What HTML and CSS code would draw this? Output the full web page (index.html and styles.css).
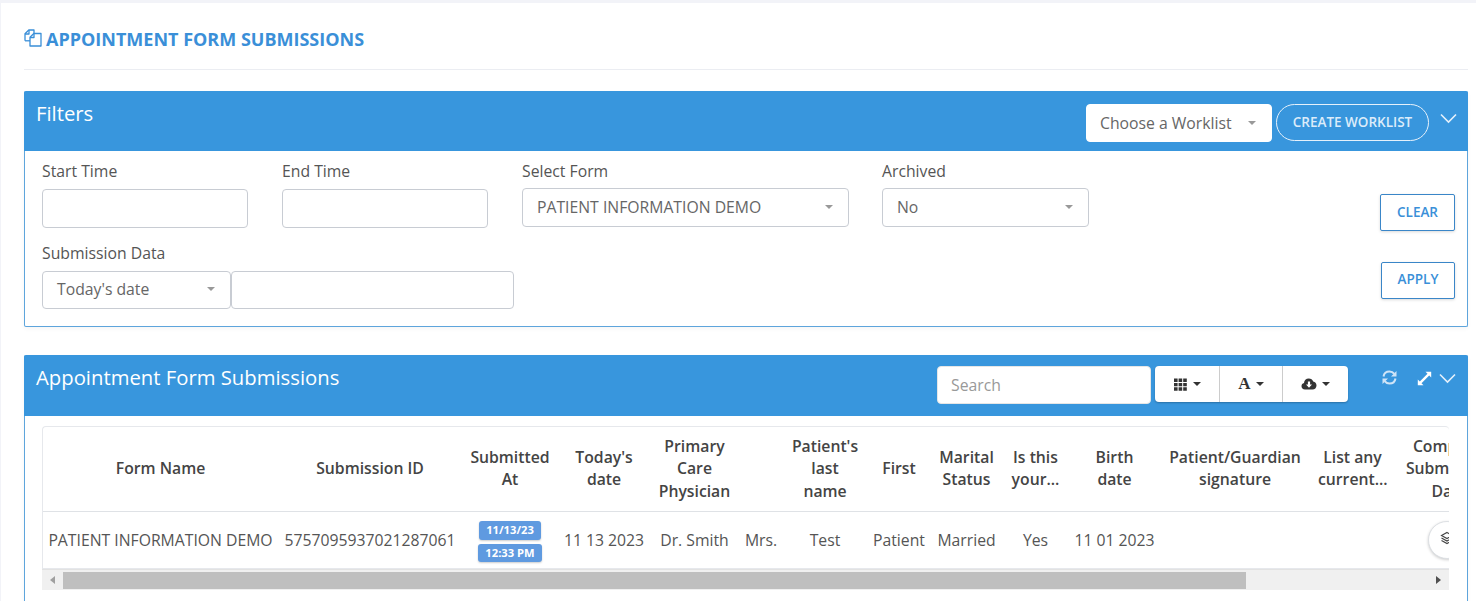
FILE: index.html
```html
<!DOCTYPE html>
<html lang="en">
<head>
<meta charset="utf-8">
<title>Appointment Form Submissions</title>
<link rel="stylesheet" href="styles.css">
</head>
<body>
<main class="page">
  <h1 class="page-title">
    <svg class="title-icon" width="18" height="18" viewBox="0 0 18 18" fill="none" stroke="#3a8fd8" stroke-width="1.3" stroke-linejoin="round"><path d="M1 11.800V4.800L4.800 1H10V4.500"/><path d="M1 5H5V1"/><path d="M1 11.800H6"/><path d="M6 17V8.300L9.800 4.500H17V17Z"/><path d="M6 8.500H10V4.500"/></svg>
    APPOINTMENT FORM SUBMISSIONS
  </h1>
  <section class="panel filters">
    <header class="panel-head filters-head">
      <h2 class="panel-title">Filters</h2>
      <div class="head-tools">
        <div class="select worklist"><span>Choose a Worklist</span><i class="caret"></i></div>
        <button class="pill">CREATE WORKLIST</button>
        <svg class="chev" width="18" height="12" viewBox="0 0 18 12" fill="none" stroke="#e4f0fb" stroke-width="1.6"><path d="M1 1.500L8.500 9L16 1.500"/></svg>
      </div>
    </header>
    <div class="filters-body">
      <div class="filter-fields">
        <div class="row">
          <label class="field f-start">Start Time<span class="input"></span></label>
          <label class="field f-end">End Time<span class="input"></span></label>
          <label class="field f-form">Select Form<span class="select up"><span>PATIENT INFORMATION DEMO</span><i class="caret"></i></span></label>
          <label class="field f-arch">Archived<span class="select up"><span>No</span><i class="caret"></i></span></label>
        </div>
        <div class="field-group">
          <span class="group-label">Submission Data</span>
          <div class="group-controls">
            <div class="select today"><span>Today's date</span><i class="caret"></i></div>
            <div class="input wide"></div>
          </div>
        </div>
      </div>
      <div class="filter-actions">
        <button class="outline clear">CLEAR</button>
        <button class="outline apply">APPLY</button>
      </div>
    </div>
  </section>
  <section class="panel results">
    <header class="panel-head results-head">
      <h2 class="panel-title">Appointment Form Submissions</h2>
      <div class="head-tools tools-results">
        <div class="search">Search</div>
        <div class="btn-group">
          <div class="tool t-grid">
            <svg width="15" height="13" viewBox="0 0 15 13" fill="#333"><path d="M1 0.500h3.600v3.400H1zM5.600 0.500h3.600v3.400H5.600zM10.200 0.500h3.600v3.400h-3.600zM1 4.900h3.600v3.400H1zM5.600 4.900h3.600v3.400H5.600zM10.200 4.900h3.600v3.400h-3.600zM1 9.300h3.600v3.400H1zM5.600 9.300h3.600v3.400H5.600zM10.200 9.300h3.600v3.400h-3.600z"/></svg><i class="caret dark"></i>
          </div>
          <div class="tool t-font"><span class="serif-a">A</span><i class="caret dark"></i></div>
          <div class="tool t-cloud">
            <svg width="16" height="12" viewBox="0 0 16 12"><path fill="#333" d="M4 11.500C1.800 11.500 .5 10 .5 8.200 .5 6.600 1.500 5.400 3 5.100 3.100 2.600 5 .5 7.800 .5 9.900 .5 11.500 1.700 12.200 3.500 14.100 3.700 15.500 5.300 15.500 7.400 15.500 9.700 13.800 11.500 11.500 11.500Z"/><path fill="#fff" d="M6.900 3.500H9.100V6.500H11L8 9.800 5 6.500H6.900Z"/></svg><i class="caret dark"></i>
          </div>
        </div>
        <svg class="refresh" width="15" height="15" viewBox="0 0 15 15" fill="none" stroke="#cfe4f7" stroke-width="2"><path d="M1.500 6.500C2 3.500 4.500 1.500 7.500 1.500 9.500 1.500 11.200 2.400 12.300 3.900"/><path d="M13.500 8.500C13 11.500 10.500 13.500 7.500 13.500 5.500 13.500 3.800 12.600 2.700 11.100"/><path fill="#cfe4f7" stroke="none" d="M14.500 1V6.500H9ZM.5 14V8.500H6Z"/></svg>
        <svg class="expand" width="15" height="15" viewBox="0 0 15 15" fill="#fff"><path d="M8.500 .8H14.200V6.500L12.200 4.500 4.500 12.200 6.500 14.200H.8V8.500L2.800 10.500 10.500 2.800Z"/></svg>
        <svg class="chev" width="18" height="12" viewBox="0 0 18 12" fill="none" stroke="#e4f0fb" stroke-width="1.600"><path d="M1 1.500L8.500 9L16 1.500"/></svg>
      </div>
    </header>
    <div class="results-body">
      <div class="table-wrap">
        <table class="grid">
          <colgroup>
            <col class="c-name"><col class="c-id"><col class="c-at"><col class="c-today"><col class="c-phys"><col class="c-title"><col class="c-last"><col class="c-first"><col class="c-marital"><col class="c-is"><col class="c-birth"><col class="c-sig"><col class="c-list"><col class="c-comp">
          </colgroup>
          <thead>
            <tr>
              <th>Form Name</th><th>Submission ID</th><th>Submitted At</th><th>Today's date</th><th>Primary Care Physician</th><th></th><th>Patient's last name</th><th>First</th><th>Marital Status</th><th>Is this your...</th><th>Birth date</th><th>Patient/Guardian signature</th><th>List any current...</th><th>Complete Submission Date</th>
            </tr>
          </thead>
          <tbody>
            <tr>
              <td>PATIENT INFORMATION DEMO</td><td>5757095937021287061</td>
              <td><span class="badge">11/13/23</span><span class="badge">12:33 PM</span></td>
              <td>11 13 2023</td><td>Dr. Smith</td><td>Mrs.</td><td>Test</td><td>Patient</td><td>Married</td><td>Yes</td><td>11 01 2023</td><td></td><td></td>
              <td><span class="round-btn"><svg width="14" height="14" viewBox="0 0 14 14" fill="none" stroke="#444" stroke-width="1.100"><path d="M7 1.500L12.500 4.500 7 7.500 1.500 4.500Z"/><path d="M1.500 7L7 10 12.500 7"/><path d="M1.500 9.500L7 12.500 12.500 9.500"/></svg></span></td>
            </tr>
          </tbody>
        </table>
      </div>
      <div class="scrollbar">
        <i class="arrow left"></i>
        <div class="thumb"></div>
        <i class="arrow right"></i>
      </div>
    </div>
  </section>
</main>
</body>
</html>
```
FILE: styles.css
```css
* { box-sizing: border-box; }
html, body { margin: 0; height: 601px; overflow: hidden; }
body { background: #f2f3f8; padding: 3px 0 0 1px; font-family: "Open Sans", "Liberation Sans", sans-serif; color: #444; font-size: 15.75px; }
.page { background: #fff; height: 598px; padding: 0 8px 0 23px; overflow: hidden; }

.page-title { margin: 0; height: 67px; padding-top: 24px; border-bottom: 1px solid #ebedf2; font-size: 18px; line-height: 24px; font-weight: 700; color: #3a8fd8; display: flex; align-items: flex-start; gap: 4px; }
.title-icon { margin-top: 2px; flex: none; }

.panel { border: 1px solid #5ea5dc; border-top: 0; margin-top: 21px; border-radius: 2px; box-shadow: 0 2px 4px rgba(0,0,0,.04); }
.filters { height: 236px; }
.results { margin-top: 28px; height: 300px; }
.panel-head { background: #3896dd; margin: 0 -1px; display: flex; justify-content: space-between; border-radius: 2px 2px 0 0; color: #fff; }
.filters-head { height: 60px; }
.results-head { height: 61px; }
.panel-title { margin: 0; padding: 8px 0 0 12px; font-size: 20.3px; line-height: 28px; font-weight: 400; }
.head-tools { display: flex; align-items: flex-start; padding: 13px 10px 0 0; }

.select { background: #fff; border: 1px solid #c8ccd3; border-radius: 4px; display: flex; align-items: center; justify-content: space-between; padding: 0 15px 2px 14px; color: #666; font-size: 15.75px; }
.caret { display: inline-block; width: 0; height: 0; border-left: 4px solid transparent; border-right: 4px solid transparent; border-top: 4px solid #999; }
.caret.dark { border-top-color: #333; }

.worklist { width: 186px; height: 38px; border-color: #fff; padding: 0 15px 0 13px; }
.pill { width: 153px; height: 37px; margin-left: 4px; border: 1px solid #e6f1fb; border-radius: 19px; background: transparent; color: #dcecfa; font: 600 13.5px "Open Sans", sans-serif; padding: 0 0 2px; }
.chev { flex: none; }
.filters-head .chev { margin: 9px 0 0 11px; }

.filters-body { display: flex; justify-content: space-between; padding: 9px 12px 0 17px; }
.row { display: flex; align-items: flex-start; }
.field { display: flex; flex-direction: column; line-height: 22px; color: #555; font-size: 15.75px; }
.input { display: block; background: #fff; border: 1px solid #c8ccd3; border-radius: 4px; height: 39px; margin-top: 7px; }
.field .select { height: 39px; margin-top: 6px; }
.f-start { width: 206px; margin-right: 34px; }
.f-end { width: 206px; margin-right: 34px; }
.f-form { width: 327px; margin-right: 33px; }
.f-arch { width: 207px; }

.field-group { margin-top: 14px; }
.group-label { display: block; line-height: 22px; color: #555; }
.group-controls { display: flex; margin-top: 7px; }
.today { width: 189px; height: 38px; }
.input.wide { width: 283px; height: 38px; margin-top: 0; }

.filter-actions { display: flex; flex-direction: column; align-items: flex-end; padding-top: 34px; }
.outline { background: #fff; border: 1px solid #3a86c8; border-radius: 2px; color: #3a8fd8; font: 600 13.5px "Open Sans", sans-serif; height: 37px; box-shadow: 0 1px 3px rgba(0,0,0,.15); padding: 0 0 2px; }
.clear { width: 75px; }
.apply { width: 74px; margin-top: 31px; padding-bottom: 4px; }

.tools-results { padding: 11px 11px 0 0; }
.search { width: 214px; height: 38px; background: #fff; border-radius: 4px; border: 1px solid #e6e6e6; color: #999; line-height: 36px; padding-left: 13px; font-size: 15.75px; }
.btn-group { display: flex; height: 36px; margin-left: 4px; background: #fff; border-radius: 4px; box-shadow: 0 1px 2px rgba(0,0,0,.25); }
.tool { display: flex; align-items: center; justify-content: center; gap: 5px; color: #333; border-right: 1px solid #ccc; }
.tool:last-child { border-right: 0; }
.t-grid { width: 65px; }
.t-font { width: 63px; }
.t-cloud { width: 65px; }
.serif-a { font: 700 17px "Liberation Serif", serif; }
.refresh { margin: 4px 0 0 34px; flex: none; }
.expand { margin: 5px 0 0 20px; flex: none; }
.results-head .chev { margin: 7px 0 0 7px; }

.results-body { padding: 10px 18px 0 17px; }
.table-wrap { overflow: hidden; border: 1px solid #e6e8ec; border-right: 0; border-radius: 4px 4px 0 0; height: 143px; }
.grid { border-collapse: collapse; table-layout: fixed; width: 1461px; color: #444; }
.c-name { width: 235px; } .c-id { width: 184px; } .c-at { width: 96px; } .c-today { width: 92px; } .c-phys { width: 89px; } .c-title { width: 44px; } .c-last { width: 84px; } .c-first { width: 64px; } .c-marital { width: 71px; } .c-is { width: 67px; } .c-birth { width: 91px; } .c-sig { width: 150px; } .c-list { width: 85px; } .c-comp { width: 109px; }
.grid th { height: 84px; padding: 0 8px 1px; font-weight: 600; font-size: 15.75px; line-height: 22.5px; text-align: center; border-bottom: 1px solid #dfe2e6; color: #444; vertical-align: middle; }
.grid td { height: 57px; padding: 0; text-align: center; font-size: 15.75px; white-space: nowrap; vertical-align: middle; color: #555; }
.badge { display: block; width: fit-content; height: 18px; margin: 4px auto; padding: 0 7.5px; background: #5f9ae0; color: #fff; border-radius: 3px; font-size: 11.2px; font-weight: 700; line-height: 18px; box-shadow: 0 1px 2px rgba(0,0,0,.2); }
.badge:first-child { height: 19px; margin-top: 7px; }
.round-btn { display: flex; align-items: center; justify-content: center; width: 38px; height: 38px; margin: 0 0 0 33px; padding-bottom: 4px; border-radius: 50%; background: #fff; border: 1px solid #dde0e4; box-shadow: 0 1px 3px rgba(0,0,0,.2); }

.scrollbar { height: 21px; background: #f0f0f0; border-top: 1px solid #e2e2e2; display: flex; align-items: center; position: relative; padding: 1px 0 0 21px; width: 1407px; }
.thumb { width: 1183px; height: 17px; background: #bfbfbf; }
.arrow { position: absolute; top: 6px; width: 0; height: 0; border-top: 4.5px solid transparent; border-bottom: 4.5px solid transparent; }
.arrow.left { left: 8px; border-right: 5px solid #a0a0a0; }
.arrow.right { right: 8px; border-left: 5px solid #505050; }
```
